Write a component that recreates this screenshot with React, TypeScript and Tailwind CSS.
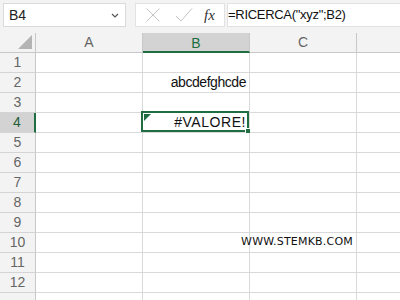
import React from "react";

const GREEN = "#1e6e42";
const rows = Array.from({ length: 13 }, (_, i) => i + 1);
const cols = ["A", "B", "C"];

function cellText(row: number, col: string) {
  if (row === 2 && col === "B") {
    return <span className="tracking-[-0.45px]">abcdefghcde</span>;
  }
  if (row === 4 && col === "B") {
    return <span className="tracking-[0.55px]">#VALORE!</span>;
  }
  if (row === 10 && col === "C") {
    return (
      <span className="font-['DejaVu_Sans',sans-serif] text-[11px] tracking-[0.2px] text-[#111]">
        WWW.STEMKB.COM
      </span>
    );
  }
  return null;
}

function NameBox() {
  return (
    <div className="ml-[3px] flex h-[24px] w-[123px] items-center justify-between border border-[#dadada] bg-white pl-[5px] pr-[6px]">
      <span className="text-[14px] text-[#222]">B4</span>
      <svg width="8" height="5" viewBox="0 0 8 5">
        <path d="M1 1 L4 4 L7 1" fill="none" stroke="#555" strokeWidth="1.2" />
      </svg>
    </div>
  );
}

function FormulaBar() {
  return (
    <div className="flex h-[24px] flex-1 items-center gap-[2px]">
      <div className="flex h-full w-[90px] items-center border border-[#e2e2e2] bg-white pl-[9px]">
        <svg width="16" height="16" viewBox="0 0 16 16">
          <path d="M1.5 1.5 L14.5 14.5 M14.5 1.5 L1.5 14.5" stroke="#c4c4c4" strokeWidth="1" />
        </svg>
        <svg width="18" height="16" viewBox="0 0 18 16" className="ml-[14px]">
          <path d="M1 9 L6 14 L17 1.5" fill="none" stroke="#c4c4c4" strokeWidth="1" />
        </svg>
        <span className="ml-[11px] font-['Liberation_Serif',serif] text-[15px] italic text-[#333]">
          fx
        </span>
      </div>
      <div className="flex h-full flex-1 items-center border border-r-0 border-[#e2e2e2] bg-white">
        <span className="text-[13px] tracking-[-0.3px] text-[#111]">=RICERCA("xyz";B2)</span>
      </div>
    </div>
  );
}

export default function App() {
  return (
    <div className="h-[300px] w-[400px] overflow-hidden bg-white font-['Liberation_Sans',Arial,sans-serif]">
      <div className="flex h-[33px] items-start gap-[9px] bg-[#f3f3f3] pt-[3px]">
        <NameBox />
        <FormulaBar />
      </div>
      <div className="grid grid-cols-[36px_107px_107px_107px_1fr]">
        <div className="relative h-[20px] border-b border-r border-[#c8c8c8] bg-[#f3f3f3]">
          <svg width="16" height="16" viewBox="0 0 16 16" className="absolute bottom-[2px] right-[2px]">
            <path d="M15 1 L15 15 L1 15 Z" fill="#b4b4b4" />
          </svg>
        </div>
        {cols.map((c) => (
          <div
            key={c}
            className={
              c === "B"
                ? "flex h-[20px] items-center justify-center border-b-2 border-r border-b-[#1e6e42] border-r-[#c8c8c8] bg-[#d3d3d3] pt-[2px] text-[14px] text-[#1e6e42]"
                : "flex h-[20px] items-center justify-center border-b border-r border-[#c8c8c8] bg-[#f3f3f3] text-[14px] text-[#666]"
            }
          >
            {c}
          </div>
        ))}
        <div className="h-[20px] border-b border-[#c8c8c8] bg-[#f3f3f3]" />

        {rows.map((r) => (
          <React.Fragment key={r}>
            <div
              className={
                r === 4
                  ? "flex h-[20px] items-center justify-center border-b border-r-2 border-b-[#d4d4d4] border-r-[#1e6e42] bg-[#d3d3d3] text-[14px] text-[#1e5e3a]"
                  : "flex h-[20px] items-center justify-center border-b border-r border-b-[#d4d4d4] border-r-[#c8c8c8] bg-[#f3f3f3] text-[14px] text-[#666]"
              }
            >
              {r < 13 ? r : null}
            </div>
            {cols.map((c) => (
              <div
                key={c}
                className="relative flex h-[20px] items-center justify-end border-b border-r border-[#d9d9d9] pr-[3px] text-[14px] text-[#111]"
              >
                {cellText(r, c)}
                {r === 4 && c === "B" && (
                  <div className="pointer-events-none absolute -left-[2px] -top-[2px] h-[21px] w-[108px] border-2 border-[#1e6e42]">
                    <svg width="7" height="7" viewBox="0 0 7 7" className="absolute left-[1px] top-[1px]">
                      <path d="M0 0 L7 0 L0 7 Z" fill={GREEN} />
                    </svg>
                    <div className="absolute -bottom-[4px] -right-[4px] h-[6px] w-[6px] border border-white bg-[#1e6e42]" />
                  </div>
                )}
              </div>
            ))}
            <div className="h-[20px] border-b border-[#d9d9d9]" />
          </React.Fragment>
        ))}
      </div>
    </div>
  );
}
